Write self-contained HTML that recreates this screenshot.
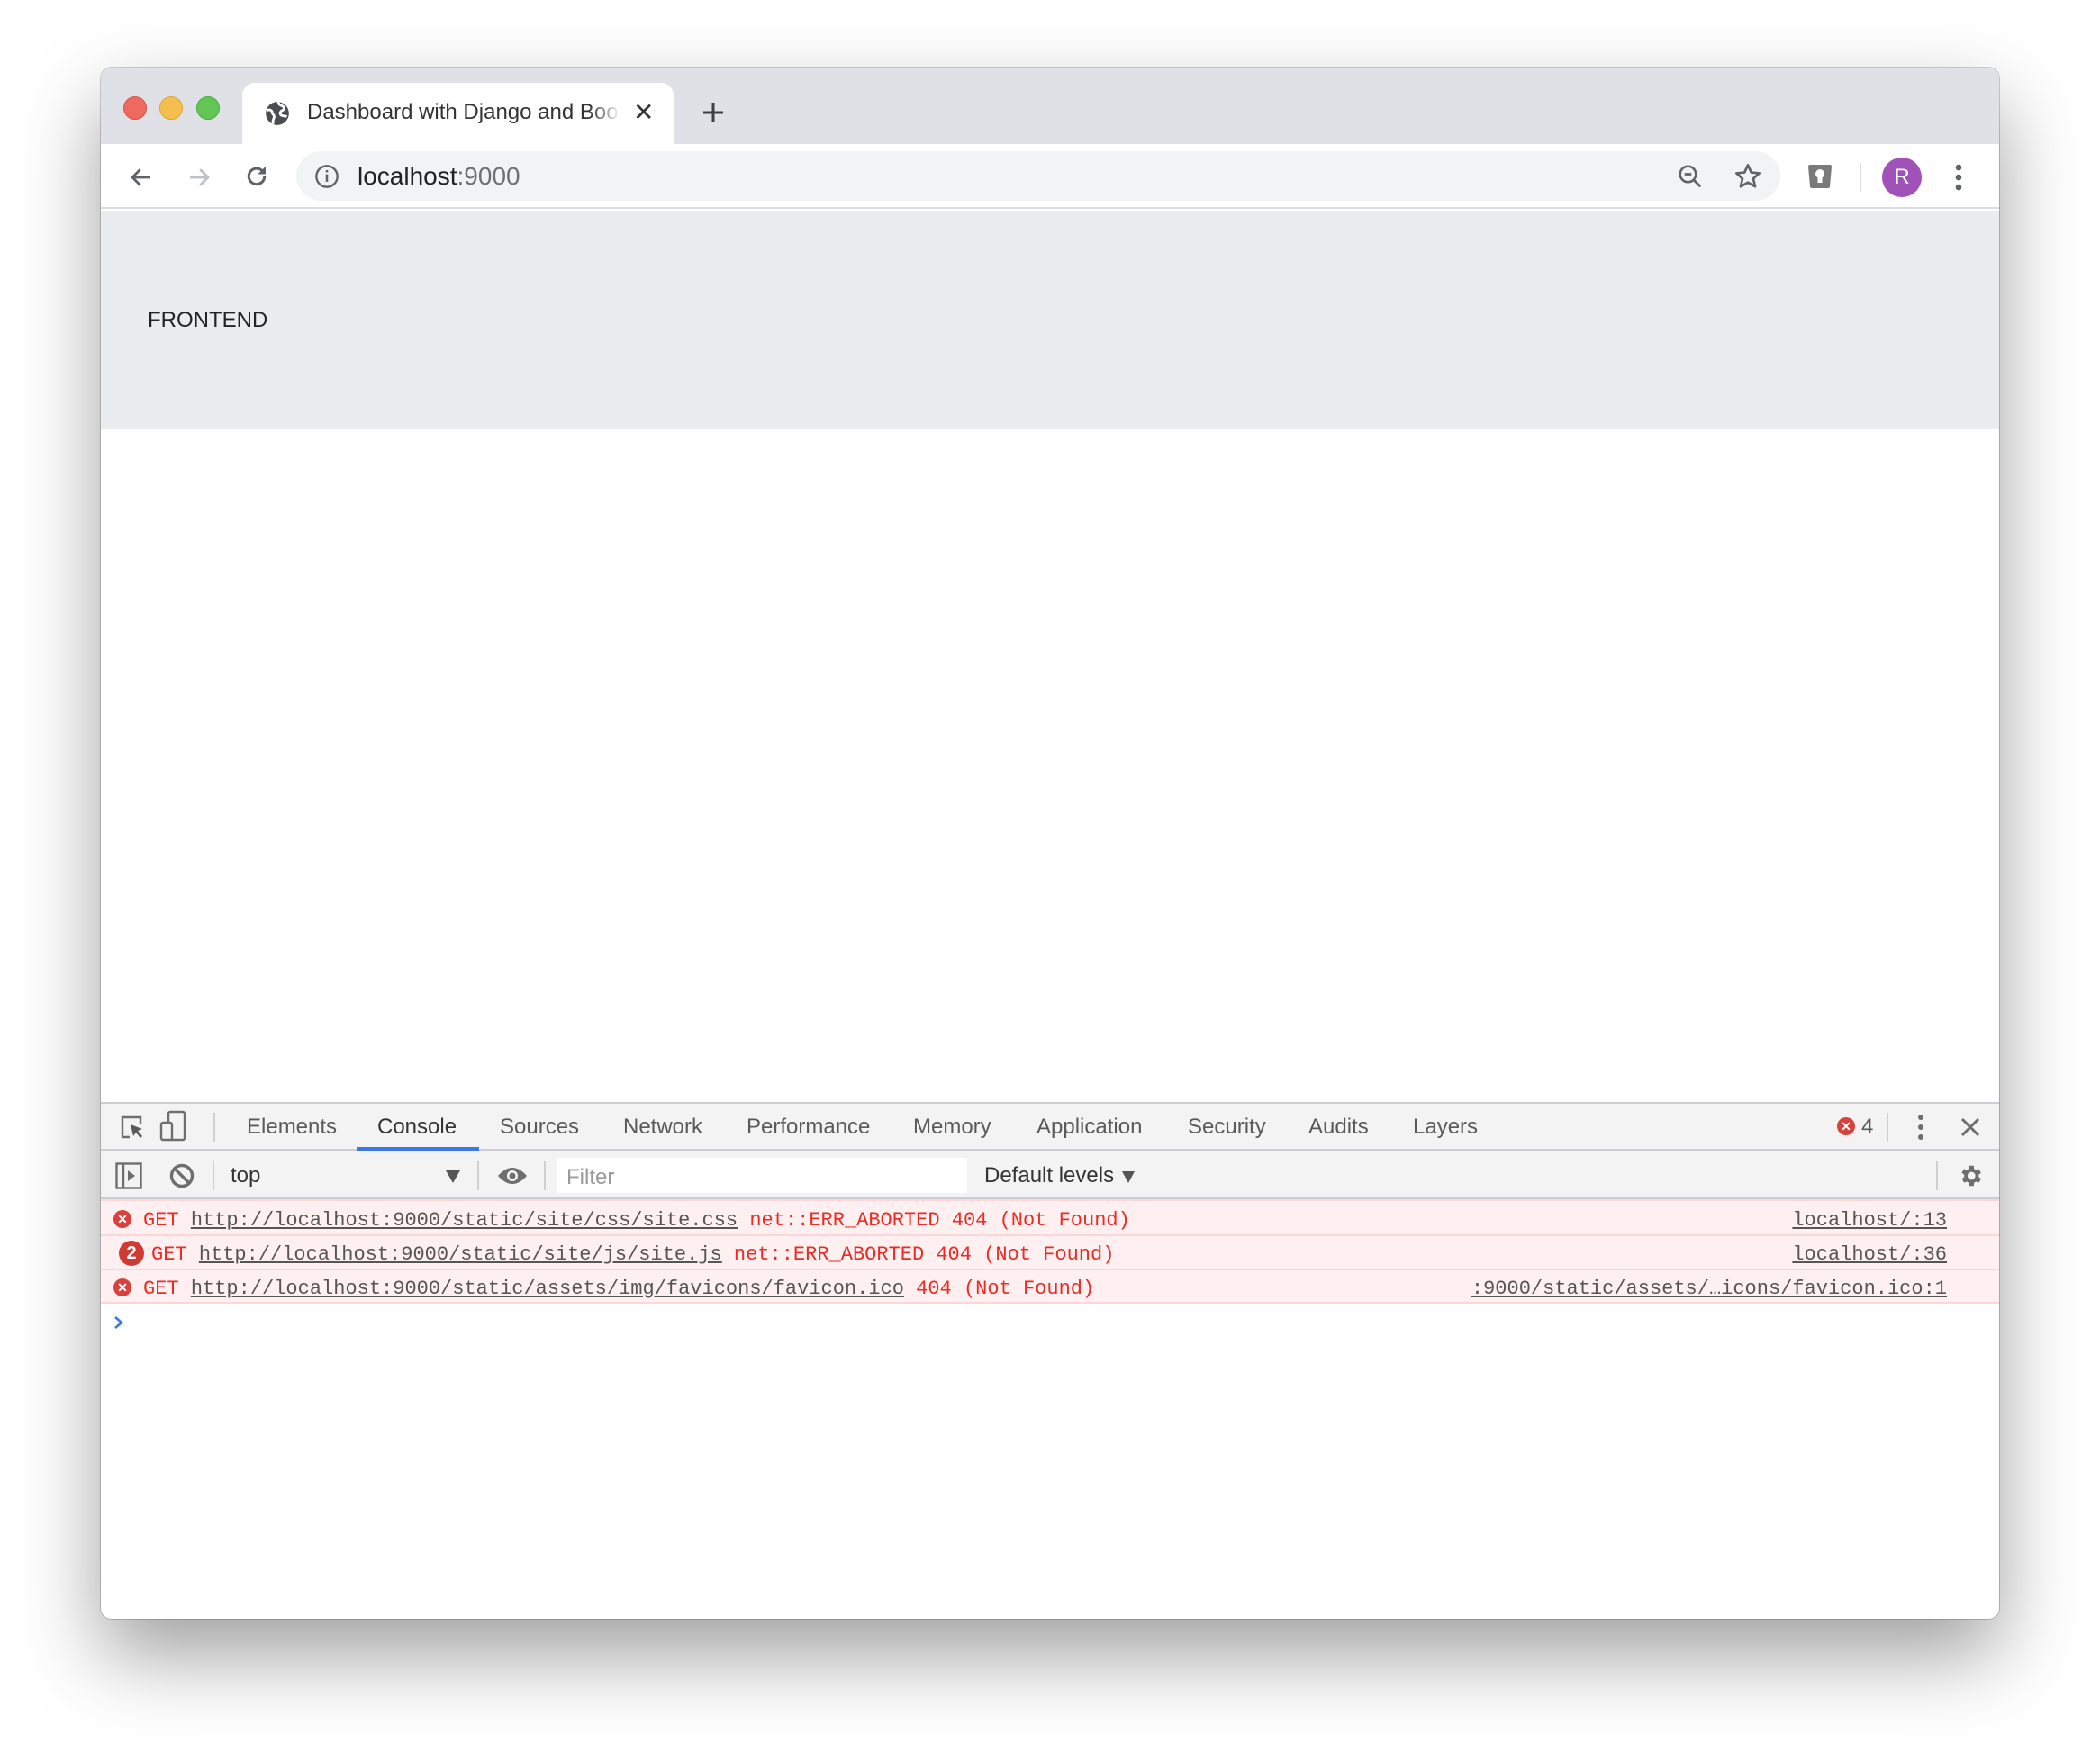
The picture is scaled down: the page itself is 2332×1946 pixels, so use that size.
<!DOCTYPE html>
<html><head><meta charset="utf-8"><style>
*{margin:0;padding:0;box-sizing:border-box}
html,body{width:2332px;height:1946px;background:#fff;overflow:hidden;font-family:"Liberation Sans",sans-serif}
.win{position:absolute;left:112px;top:75px;width:2108px;height:1723px;border-radius:12px;overflow:hidden;background:#fff;box-shadow:0 40px 90px rgba(0,0,0,.38),0 0 0 1px rgba(0,0,0,.18)}
.abs{position:absolute}
.strip{left:0;top:0;width:100%;height:85px;background:#dfe1e6}
.light{width:26px;height:26px;border-radius:50%;top:32px}
.tab{left:157px;top:17px;width:479px;height:70px;background:#fff;border-radius:14px 14px 0 0}
.tabt{left:229px;top:36px;font-size:24px;color:#333;white-space:nowrap;width:348px;overflow:hidden;
 -webkit-mask-image:linear-gradient(90deg,#000 90%,transparent)}
.tool{left:0;top:85px;width:100%;height:72px;background:#fff;border-bottom:2px solid #dadce0}
.omni{left:217px;top:93px;width:1648px;height:55px;background:#f1f3f4;border-radius:28px}
.url{left:285px;top:105px;font-size:28px;color:#202124}
.hdr{left:0;top:159px;width:100%;height:242px;background:#ebecf0}
.dt{left:0;top:1149px;width:100%;height:574px;background:#fff}
.tb{left:0;top:0;width:100%;height:54px;background:#f3f3f3;border-top:2px solid #cacdd1;border-bottom:2px solid #cacdd1}
.t{top:14px;font-size:24px;color:#5a5a5a}
.tb2{left:0;top:54px;width:100%;height:54px;background:#f3f3f3;border-bottom:2px solid #cacdd1}
.sep{width:2px;background:#d0d0d0}
.row{left:0;width:100%;background:#fef0f0;border-bottom:2px solid #fbd7d7;font-family:"Liberation Mono",monospace;font-size:22px;color:#ec2b24;white-space:pre}
.row span.u{color:#555;text-decoration:underline}
.row .r{position:absolute;right:58px;top:9px;color:#555;text-decoration:underline}
.ico{position:absolute;width:20px;height:20px;border-radius:50%;background:#d9423c;color:#fff;font-size:14px;line-height:20px;text-align:center;font-family:"Liberation Sans",sans-serif;font-weight:bold}
</style></head><body>
<div class="win">
 <div class="abs strip"></div>
 <div class="abs light" style="left:25px;background:#ee6a5f;border:1px solid #d9534a"></div>
 <div class="abs light" style="left:65px;background:#f5bf4f;border:1px solid #dea43a"></div>
 <div class="abs light" style="left:106px;background:#62c655;border:1px solid #4eaa42"></div>
 <div class="abs tab"></div>
 <svg class="abs" style="left:182px;top:37px" width="28" height="28" viewBox="0 0 24 24"><circle cx="12" cy="12" r="11" fill="#4a4d52"/><path d="M2 9c3-1 5 0 5 2s2 2 2 4-2 3-1 7M13 1c0 3 2 3 4 4s2 3 0 4-3 2-2 4 4 1 6 2" stroke="#fff" stroke-width="2.4" fill="none"/></svg>
 <div class="abs tabt">Dashboard with Django and Bootstrap</div>
 <div class="abs" style="left:591px;top:33px;font-size:28px;color:#333">✕</div>
 <svg class="abs" style="left:667px;top:37px" width="26" height="26"><path d="M13 2v22M2 13h22" stroke="#3c4043" stroke-width="3"/></svg>
 <div class="abs tool"></div>
 <svg class="abs" style="left:30px;top:107px" width="30" height="30" viewBox="0 0 24 24"><path d="M20 12H5M11 5l-7 7 7 7" stroke="#5f6368" stroke-width="2.2" fill="none"/></svg>
 <svg class="abs" style="left:94px;top:107px" width="30" height="30" viewBox="0 0 24 24"><path d="M4 12h15M13 5l7 7-7 7" stroke="#bdc1c6" stroke-width="2.2" fill="none"/></svg>
 <svg class="abs" style="left:158px;top:106px" width="30" height="30" viewBox="0 0 24 24"><path d="M19 12a7 7 0 1 1-2-5" stroke="#5f6368" stroke-width="2.4" fill="none"/><path d="M20 3v7h-7z" fill="#5f6368"/></svg>
 <div class="abs omni"></div>
 <svg class="abs" style="left:237px;top:107px" width="28" height="28" viewBox="0 0 24 24"><circle cx="12" cy="12" r="10" stroke="#5f6368" stroke-width="2" fill="none"/><path d="M12 10v7M12 6v2" stroke="#5f6368" stroke-width="2.2"/></svg>
 <div class="abs url">localhost<span style="color:#6d7175">:9000</span></div>
 <svg class="abs" style="left:1750px;top:106px" width="30" height="30" viewBox="0 0 24 24"><circle cx="10" cy="10" r="7" stroke="#5f6368" stroke-width="2" fill="none"/><path d="M7 10h6M15 15l6 6" stroke="#5f6368" stroke-width="2.2"/></svg>
 <svg class="abs" style="left:1813px;top:105px" width="32" height="32" viewBox="0 0 24 24"><path d="M12 2.5l2.8 6.2 6.7.6-5 4.5 1.5 6.6L12 17l-6 3.4 1.5-6.6-5-4.5 6.7-.6z" stroke="#5f6368" stroke-width="2" fill="none" stroke-linejoin="round"/></svg>
 <svg class="abs" style="left:1894px;top:107px" width="30" height="28" viewBox="0 0 30 28"><path d="M2 3q0-2 2-2h22q2 0 2 2l-2 22q0 2-2 2H6q-2 0-2-2z" fill="#7a7a7a"/><circle cx="15" cy="11" r="5" fill="#fff"/><rect x="12.5" y="12" width="5" height="9" fill="#fff"/></svg>
 <div class="abs" style="left:1953px;top:106px;width:2px;height:32px;background:#dadce0"></div>
 <div class="abs" style="left:1978px;top:100px;width:44px;height:44px;border-radius:50%;background:#a052b8;color:#fff;font-size:24px;text-align:center;line-height:44px">R</div>
 <svg class="abs" style="left:2056px;top:106px" width="14" height="32"><circle cx="7" cy="5" r="3.3" fill="#5f6368"/><circle cx="7" cy="16" r="3.3" fill="#5f6368"/><circle cx="7" cy="27" r="3.3" fill="#5f6368"/></svg>
 <div class="abs hdr"></div>
 <div class="abs" style="left:52px;top:267px;font-size:24px;color:#212529">FRONTEND</div>

 <div class="abs dt">
  <div class="abs tb"></div>
  <svg class="abs" style="left:20px;top:13px" width="30" height="30" viewBox="0 0 30 30"><path d="M12 26H4V4h20v8" stroke="#6e6e6e" stroke-width="2.4" fill="none"/><path d="M13 12l13 5-5 2 5 6-2 2-5-6-3 4z" fill="#5a5a5a"/></svg>
  <svg class="abs" style="left:64px;top:9px" width="32" height="36" viewBox="0 0 32 36"><rect x="11" y="2" width="18" height="31" rx="2" stroke="#6e6e6e" stroke-width="2.4" fill="none"/><rect x="3" y="14" width="12" height="19" rx="2" stroke="#6e6e6e" stroke-width="2.4" fill="#f3f3f3"/></svg>
  <div class="abs sep" style="left:125px;top:12px;height:32px"></div>
  <div class="abs t" style="left:162px">Elements</div>
  <div class="abs t" style="left:307px;color:#333">Console</div>
  <div class="abs" style="left:284px;top:50px;width:136px;height:4px;background:#3b78e7"></div>
  <div class="abs t" style="left:443px">Sources</div>
  <div class="abs t" style="left:580px">Network</div>
  <div class="abs t" style="left:717px">Performance</div>
  <div class="abs t" style="left:902px">Memory</div>
  <div class="abs t" style="left:1039px">Application</div>
  <div class="abs t" style="left:1207px">Security</div>
  <div class="abs t" style="left:1341px">Audits</div>
  <div class="abs t" style="left:1457px">Layers</div>
  <div class="ico" style="left:1928px;top:17px">✕</div>
  <div class="abs t" style="left:1955px">4</div>
  <div class="abs sep" style="left:1983px;top:12px;height:32px"></div>
  <svg class="abs" style="left:2015px;top:12px" width="12" height="32"><circle cx="6" cy="5" r="3" fill="#6e6e6e"/><circle cx="6" cy="16" r="3" fill="#6e6e6e"/><circle cx="6" cy="27" r="3" fill="#6e6e6e"/></svg>
  <svg class="abs" style="left:2064px;top:16px" width="24" height="24"><path d="M3 3l18 18M21 3L3 21" stroke="#6e6e6e" stroke-width="3"/></svg>

  <div class="abs tb2"></div>
  <svg class="abs" style="left:16px;top:67px" width="30" height="30" viewBox="0 0 30 30"><rect x="1.5" y="1.5" width="27" height="27" stroke="#6e6e6e" stroke-width="2.4" fill="none"/><path d="M9 2v26" stroke="#6e6e6e" stroke-width="2.4"/><path d="M14 9l8 6-8 6z" fill="#6e6e6e"/></svg>
  <svg class="abs" style="left:75px;top:67px" width="30" height="30" viewBox="0 0 30 30"><circle cx="15" cy="15" r="11.5" stroke="#6e6e6e" stroke-width="3.4" fill="none"/><path d="M7 7l16 16" stroke="#6e6e6e" stroke-width="3.4"/></svg>
  <div class="abs sep" style="left:124px;top:66px;height:32px"></div>
  <div class="abs" style="left:144px;top:68px;font-size:24px;color:#333">top</div>
  <svg class="abs" style="left:383px;top:76px" width="16" height="14"><path d="M0 0h16L8 14z" fill="#555"/></svg>
  <div class="abs sep" style="left:418px;top:66px;height:32px"></div>
  <svg class="abs" style="left:440px;top:70px" width="34" height="24" viewBox="0 0 34 24"><path d="M1 12Q17-6 33 12Q17 30 1 12z" fill="#6e6e6e"/><circle cx="17" cy="12" r="6" fill="#f3f3f3"/><circle cx="17" cy="12" r="3.5" fill="#6e6e6e"/></svg>
  <div class="abs sep" style="left:492px;top:66px;height:32px"></div>
  <div class="abs" style="left:506px;top:62px;width:456px;height:39px;background:#fff"></div>
  <div class="abs" style="left:517px;top:70px;font-size:24px;color:#9a9a9a">Filter</div>
  <div class="abs" style="left:981px;top:68px;font-size:24px;color:#333">Default levels</div>
  <svg class="abs" style="left:1134px;top:77px" width="14" height="13"><path d="M0 0h14L7 13z" fill="#555"/></svg>
  <div class="abs sep" style="left:2038px;top:66px;height:32px"></div>
  <svg class="abs" style="left:2061px;top:67px" width="30" height="30" viewBox="0 0 24 24"><path fill="#6e6e6e" d="M19.4 13a7.5 7.5 0 0 0 0-2l2.1-1.6-2-3.5-2.5 1a7 7 0 0 0-1.7-1L15 3h-4l-.4 2.9a7 7 0 0 0-1.7 1l-2.5-1-2 3.5L6.6 11a7.5 7.5 0 0 0 0 2l-2.1 1.6 2 3.5 2.5-1a7 7 0 0 0 1.7 1L11 21h4l.4-2.9a7 7 0 0 0 1.7-1l2.5 1 2-3.5zM13 15.5a3.5 3.5 0 1 1 0-7 3.5 3.5 0 0 1 0 7z"/></svg>

  <div class="abs" style="left:0;top:108px;width:100%;height:2px;background:#fbd7d7"></div>
  <div class="abs row" style="top:110px;height:39px;padding:9px 0 0 47px"><div class="ico" style="left:14px;top:10px">✕</div>GET <span class="u">http://localhost:9000/static/site/css/site.css</span> net::ERR_ABORTED 404 (Not Found)<span class="r">localhost/:13</span></div>
  <div class="abs row" style="top:149px;height:38px;padding:8px 0 0 56px"><div class="ico" style="left:20px;top:5px;width:28px;height:28px;line-height:28px;font-size:20px;background:#cf3a32">2</div>GET <span class="u">http://localhost:9000/static/site/js/site.js</span> net::ERR_ABORTED 404 (Not Found)<span class="r" style="top:8px">localhost/:36</span></div>
  <div class="abs row" style="top:187px;height:37px;padding:8px 0 0 47px"><div class="ico" style="left:14px;top:9px">✕</div>GET <span class="u">http://localhost:9000/static/assets/img/favicons/favicon.ico</span> 404 (Not Found)<span class="r" style="top:8px">:9000/static/assets/…icons/favicon.ico:1</span></div>
  <svg class="abs" style="left:14px;top:237px" width="12" height="16"><path d="M2 2l7 6-7 6" stroke="#3b78e7" stroke-width="2.6" fill="none"/></svg>
 </div>
</div>
</body></html>
